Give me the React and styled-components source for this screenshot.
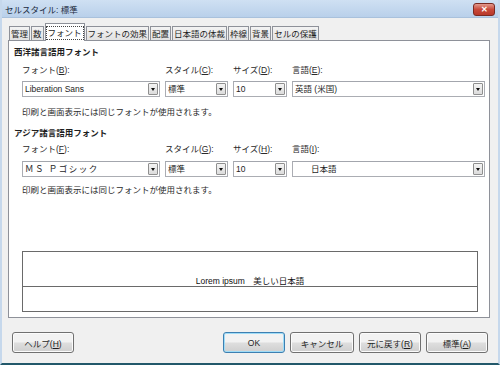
import React from 'react';
import styled, { createGlobalStyle } from 'styled-components';

const GlobalStyle = createGlobalStyle`
  html, body {
    margin: 0;
    padding: 0;
    background: #f0f0f0;
  }
  body {
    font-family: "Liberation Sans", "Noto Sans CJK JP", sans-serif;
    font-size: 8.5px;
    color: #1e1e1e;
  }
`;

const Window = styled.div`
  width: 500px;
  height: 365px;
  display: flex;
  flex-direction: column;
  background: #f0f0f0;
  border-left: 2px solid #c6d8ec;
  border-right: 2px solid #c6d8ec;
  border-bottom: 2px solid #22586a;
  box-sizing: border-box;
  overflow: hidden;
`;

const TitleBar = styled.div`
  height: 17px;
  flex: none;
  display: flex;
  align-items: center;
  justify-content: space-between;
  padding: 0 3px 0 3px;
  background: linear-gradient(#cfe0f3, #b9d0ea);
  border-bottom: 1px solid #a9c1dc;
  font-size: 8.5px;
  color: #1b2b3f;
`;

const CloseButton = styled.div`
  width: 20px;
  height: 11px;
  margin-top: 2px;
  border: 1px solid #7a2a22;
  border-radius: 3px;
  background: linear-gradient(#e39a8e, #c8493a 50%, #b8382a);
  display: flex;
  align-items: center;
  justify-content: center;
  color: #fff;
  font-size: 8px;
  font-weight: bold;
  line-height: 1;
`;

const Body = styled.div`
  flex: 1;
  display: flex;
  flex-direction: column;
  padding: 5px 8px 0 6px;
`;

const TabStrip = styled.div`
  display: flex;
  align-items: flex-end;
  padding-left: 1px;
  height: 18px;
  position: relative;
  z-index: 1;
  margin-bottom: -1px;
`;

const Tab = styled.div`
  height: ${p => (p.$active ? '18px' : '15px')};
  box-sizing: border-box;
  padding: 0 1px;
  margin-right: 1px;
  border: 1px solid #8e9199;
  border-bottom: ${p => (p.$active ? 'none' : '1px solid #8e9199')};
  background: ${p => (p.$active ? '#fff' : 'linear-gradient(#f3f3f3, #e2e2e2)')};
  display: flex;
  align-items: center;
  line-height: 12px;
  white-space: nowrap;
`;

const Focus = styled.span`
  outline: 1px dotted #444;
  padding: 0 1px;
`;

const Panel = styled.div`
  height: 278px;
  box-sizing: border-box;
  background: #fff;
  border: 1px solid #8e9199;
  padding: 5px 0 0 5px;
  display: flex;
  flex-direction: column;
`;

const Heading = styled.div`
  font-weight: bold;
  line-height: 12px;
  margin-top: ${p => p.$top || 0}px;
`;

const Grid = styled.div`
  display: grid;
  grid-template-columns: 138px 63px 54px 193px;
  column-gap: 5px;
  margin-left: 8px;
`;

const Label = styled.div`
  line-height: 12px;
  margin-top: ${p => p.$top}px;
  color: #2a2a2a;
  u {
    text-decoration: underline;
  }
`;

const Combo = styled.div`
  height: 16px;
  box-sizing: border-box;
  margin-top: ${p => p.$top}px;
  border: 1px solid #abadb3;
  border-top-color: #a3a6ad;
  background: #fff;
  display: flex;
  align-items: center;
  padding: 0 1px 0 2px;
`;

const ComboText = styled.div`
  flex: 1;
  line-height: 12px;
  padding-left: ${p => p.$indent || 0}px;
  white-space: nowrap;
  overflow: hidden;
  letter-spacing: ${p => p.$spaced ? '1.5px' : 'normal'};
`;

const DropButton = styled.div`
  width: 10px;
  height: 12px;
  box-sizing: border-box;
  border: 1px solid #8f8f8f;
  border-radius: 1px;
  background: linear-gradient(#f4f4f4, #dcdcdc);
  display: flex;
  align-items: center;
  justify-content: center;
  &::after {
    content: '';
    border-left: 2.5px solid transparent;
    border-right: 2.5px solid transparent;
    border-top: 3px solid #111;
  }
`;

const Note = styled.div`
  line-height: 12px;
  margin: ${p => p.$top}px 0 0 8px;
  color: #2a2a2a;
`;

const Preview = styled.div`
  margin: 55px 0 0 8px;
  width: 456px;
  height: 61px;
  box-sizing: border-box;
  border: 1px solid #6a6a6a;
  display: flex;
  flex-direction: column;
`;

const PreviewTop = styled.div`
  height: 34px;
  flex: none;
  border-bottom: 1px solid #6a6a6a;
  display: flex;
  align-items: flex-end;
  justify-content: center;
`;

const PreviewText = styled.span`
  font-size: 8.5px;
  line-height: 10px;
  color: #111;
  white-space: pre;
`;

const Footer = styled.div`
  display: flex;
  align-items: center;
  padding: 14px 2px 0 4px;
  gap: 5px;
`;

const Button = styled.button`
  width: ${p => p.$w || 62}px;
  height: 21px;
  box-sizing: border-box;
  border: 1px solid ${p => (p.$default ? '#3c7fb1' : '#707070')};
  border-radius: 3px;
  background: linear-gradient(#f2f2f2 45%, #dddddd 55%, #cfcfcf);
  box-shadow: ${p => (p.$default ? 'inset 0 0 0 1px #9fdcf7' : 'inset 0 0 0 1px #fbfbfb')};
  font-family: inherit;
  font-size: 8.5px;
  color: #1e1e1e;
  padding: 0;
  margin-left: ${p => (p.$push ? 'auto' : '0')};
`;

const tabs = ['管理', '数', 'フォント', 'フォントの効果', '配置', '日本語の体裁', '枠線', '背景', 'セルの保護'];

const FontSection = ({ title, keys, values, top, langIndent }) => (
  <>
    <Heading $top={top.heading}>{title}</Heading>
    <Grid>
      <Label $top={top.label}>フォント(<u>{keys[0]}</u>):</Label>
      <Label $top={top.label}>スタイル(<u>{keys[1]}</u>):</Label>
      <Label $top={top.label}>サイズ(<u>{keys[2]}</u>):</Label>
      <Label $top={top.label}>言語(<u>{keys[3]}</u>):</Label>
      {values.map((v, i) => (
        <Combo key={i} $top={top.combo}>
          <ComboText $indent={i === 3 ? langIndent : 0} $spaced={v.spaced}>{v.text}</ComboText>
          <DropButton />
        </Combo>
      ))}
    </Grid>
    <Note $top={top.note}>印刷と画面表示には同じフォントが使用されます。</Note>
  </>
);

export default function App() {
  return (
    <>
      <GlobalStyle />
      <Window>
        <TitleBar>
          <span>セルスタイル: 標準</span>
          <CloseButton>✕</CloseButton>
        </TitleBar>
        <Body>
          <TabStrip>
            {tabs.map(t => (
              <Tab key={t} $active={t === 'フォント'}>
                {t === 'フォント' ? <Focus>{t}</Focus> : t}
              </Tab>
            ))}
          </TabStrip>
          <Panel>
            <FontSection
              title="西洋諸言語用フォント"
              keys={['B', 'C', 'D', 'E']}
              values={[
                { text: 'Liberation Sans' },
                { text: '標準' },
                { text: '10' },
                { text: '英語 (米国)' },
              ]}
              top={{ heading: 0, label: 6, combo: 5, note: 9 }}
              langIndent={0}
            />
            <FontSection
              title="アジア諸言語用フォント"
              keys={['F', 'G', 'H', 'I']}
              values={[
                { text: 'ＭＳ Ｐゴシック', spaced: true },
                { text: '標準' },
                { text: '10' },
                { text: '日本語' },
              ]}
              top={{ heading: 9, label: 4, combo: 6, note: 7 }}
              langIndent={16}
            />
            <Preview>
              <PreviewTop>
                <PreviewText>Lorem ipsum　美しい日本語</PreviewText>
              </PreviewTop>
            </Preview>
          </Panel>
          <Footer>
            <Button>ヘルプ(<u>H</u>)</Button>
            <Button $push $default>OK</Button>
            <Button $w={64}>キャンセル</Button>
            <Button>元に戻す(<u>R</u>)</Button>
            <Button>標準(<u>A</u>)</Button>
          </Footer>
        </Body>
      </Window>
    </>
  );
}
